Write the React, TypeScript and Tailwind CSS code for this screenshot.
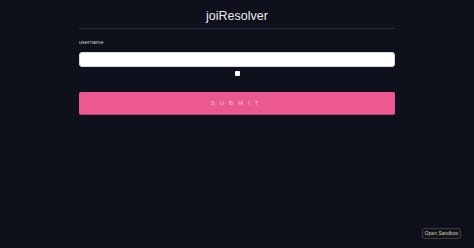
import { useState } from "react";

const App = () => {
  const [checked, setChecked] = useState(false);

  return (
    <div className="min-h-screen bg-[#0e101c] font-['Liberation_Sans',Arial,sans-serif] text-white">
      <form
        onSubmit={(e) => e.preventDefault()}
        className="w-[316px] mx-auto flex flex-col"
      >
        <h1 className="text-[12.5px] font-light text-center text-[#ececf0] leading-none pt-[10px] pb-[5px] border-b border-[#2a3142]">
          joiResolver
        </h1>
        <label className="text-[5.5px] text-[#c8cad2] mt-[11px] leading-none">username</label>
        <input
          className="mt-[7px] h-[15px] w-full rounded-[3px] bg-white border border-[#d8d8d8] px-2 text-[6px] text-black outline-none"
        />
        <div className="flex justify-center mt-[4px]">
          <input
            type="checkbox"
            checked={checked}
            onChange={(e) => setChecked(e.target.checked)}
            className="appearance-none w-[5px] h-[5px] bg-white rounded-[1px]"
          />
        </div>
        <button
          type="submit"
          className="mt-[16px] h-[23px] w-full rounded-[2px] bg-[#ec5990] border-b border-[#b8456f] text-[6px] uppercase tracking-[5px] text-[#f7c6d9] leading-none"
        >
          Submit
        </button>
      </form>

      <button className="fixed right-[13px] bottom-[9px] h-[11px] w-[39px] rounded-[2px] bg-[#151515] border border-[#3a3a3a] text-[5px] leading-none text-[#d0d0d0] whitespace-nowrap">
        Open Sandbox
      </button>
    </div>
  );
};

export default App;
